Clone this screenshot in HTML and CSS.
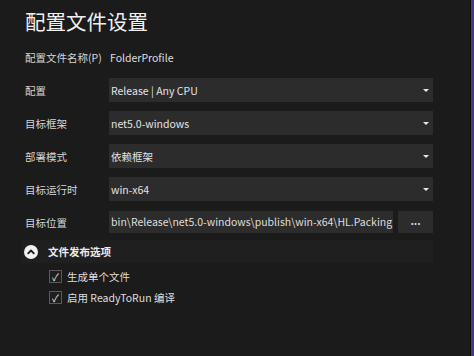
FILE: index.html
```html
<!DOCTYPE html>
<html lang="zh-CN">
<head>
    <meta charset="UTF-8">
    <title>配置文件设置</title>
    <link rel="stylesheet" href="styles.css">
</head>
<body>
    <div class="frame">
        <h1 class="title">配置文件设置</h1>

        <div class="form">
            <span class="label">配置文件名称(P)</span>
            <span class="plain">FolderProfile</span>

            <span class="label">配置</span>
            <div class="select">Release | Any CPU<span class="arrow"></span></div>

            <span class="label">目标框架</span>
            <div class="select">net5.0-windows<span class="arrow"></span></div>

            <span class="label">部署模式</span>
            <div class="select">依赖框架<span class="arrow"></span></div>

            <span class="label">目标运行时</span>
            <div class="select">win-x64<span class="arrow"></span></div>

            <span class="label">目标位置</span>
            <div class="path-row">
                <div class="path">bin\Release\net5.0-windows\publish\win-x64\HL.Packing</div>
                <div class="browse">...</div>
            </div>
        </div>

        <div class="section">
            <span class="toggle">
                <svg width="14" height="14" viewBox="0 0 14 14">
                    <circle cx="7" cy="7" r="7" fill="#f2f2f2"/>
                    <path d="M4.2 8.3 L7 5.5 L9.8 8.3" fill="none" stroke="#1b1b1b" stroke-width="1.8" stroke-linecap="round" stroke-linejoin="round"/>
                </svg>
            </span>
            <span class="section-title">文件发布选项</span>
        </div>

        <div class="options">
            <label class="check"><span class="box">✓</span>生成单个文件</label>
            <label class="check"><span class="box">✓</span>启用 ReadyToRun 编译</label>
        </div>
    </div>
</body>
</html>
```

FILE: styles.css
```css
*{
    margin: 0;
    padding: 0;
    box-sizing: border-box;
}
body{
    background-color: #1b1b1b;
    color: #dedede;
    font-family: "Noto Sans CJK SC", "Noto Sans", sans-serif;
    font-size: 10.5px;
}
.frame{
    height: 356px;
    padding: 6px 0 0 25px;
    border-right: 3px solid #443a80;
    box-shadow: inset -1px 0 0 #0e0e0e;
}
.title{
    font-weight: normal;
    font-size: 20.5px;
    line-height: 30px;
    color: #f0f0f0;
}

.form{
    display: grid;
    grid-template-columns: 84px 324px;
    grid-template-rows: 24px;
    grid-auto-rows: 24px;
    row-gap: 9px;
    align-items: center;
    margin-top: 9px;
}
.label{
    color: #d6d6d6;
    white-space: nowrap;
}
.plain{
    padding-left: 1px;
}
.select{
    display: flex;
    align-items: center;
    height: 24px;
    padding-left: 2px;
    background-color: #2c2c2c;
    color: #e2e2e2;
}
.arrow{
    margin-left: auto;
    margin-right: 4px;
    width: 0;
    height: 0;
    border-left: 3px solid transparent;
    border-right: 3px solid transparent;
    border-top: 3px solid #e8e8e8;
}
.path-row{
    display: flex;
    gap: 5px;
    height: 22px;
}
.path{
    width: 284px;
    background-color: #2c2c2c;
    padding-left: 2px;
    line-height: 22px;
    white-space: nowrap;
    overflow: hidden;
}
.browse{
    flex: 1;
    background-color: #2c2c2c;
    text-align: center;
    line-height: 20px;
    font-weight: bold;
}

.section{
    display: flex;
    align-items: center;
    gap: 10px;
    width: 411px;
    height: 23px;
    margin: 6px 0 0 -3px;
    padding-left: 2px;
    background-color: #1f1f1f;
}
.toggle{
    display: flex;
}
.section-title{
    font-weight: bold;
    color: #ececec;
}

.options{
    display: flex;
    flex-direction: column;
    gap: 8px;
    margin: 7px 0 0 24px;
}
.check{
    display: flex;
    align-items: center;
    gap: 5px;
    height: 13px;
}
.box{
    width: 13px;
    height: 13px;
    border: 1px solid #5a5a5a;
    background-color: #1e1e1e;
    font-size: 10px;
    line-height: 11px;
    text-align: center;
    color: #f0f0f0;
}
```
